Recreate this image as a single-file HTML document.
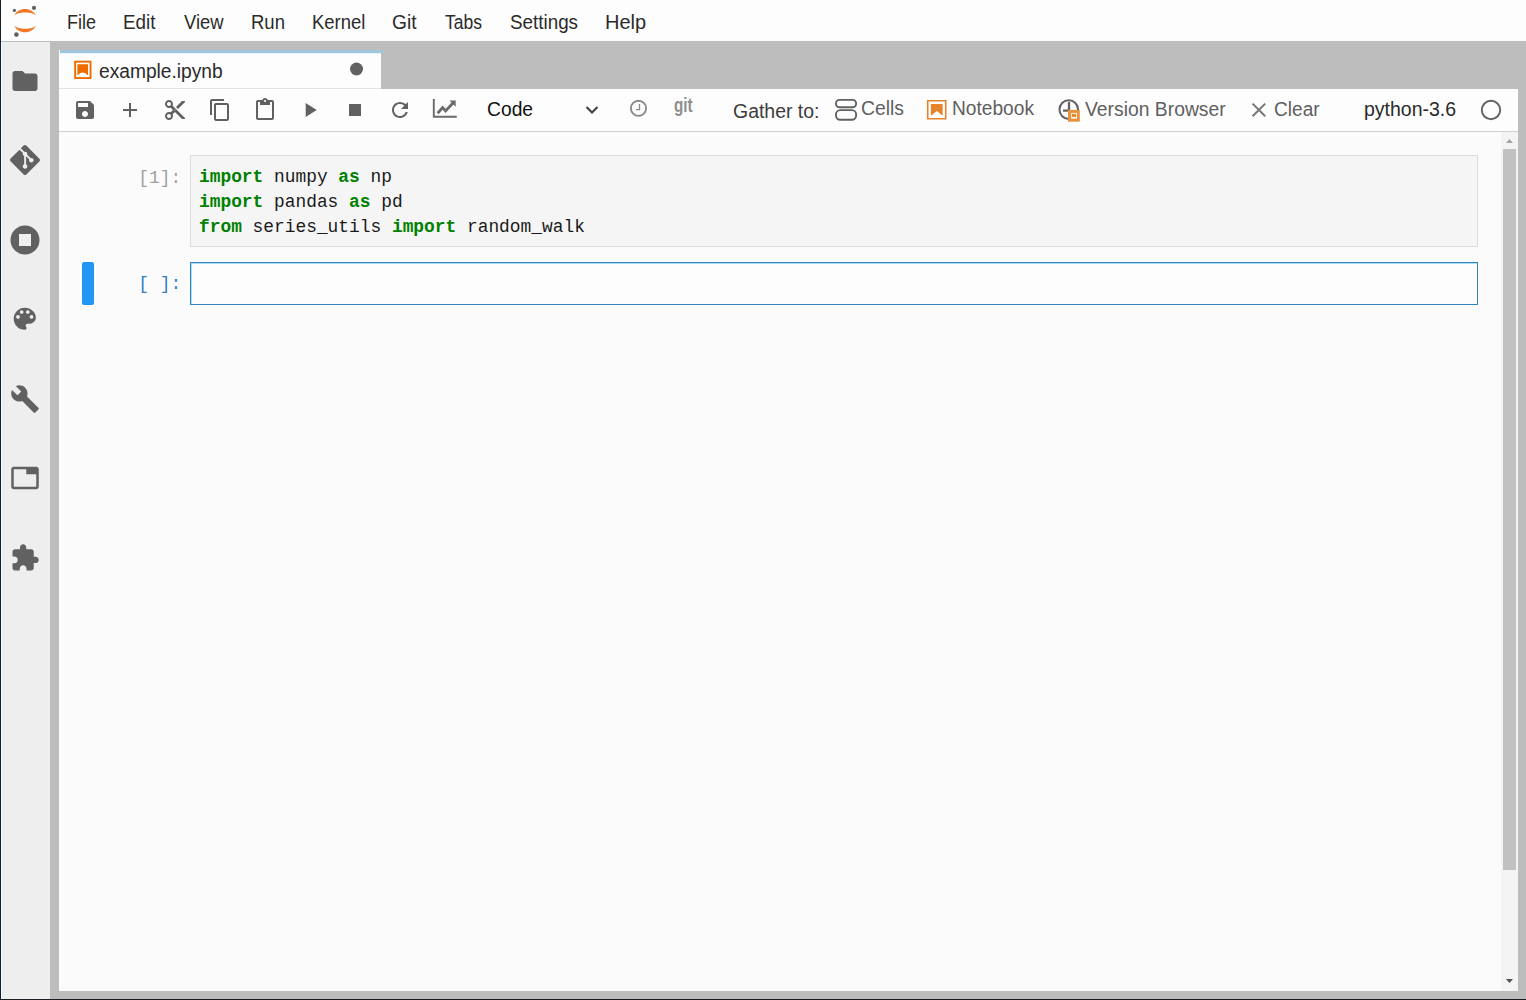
<!DOCTYPE html>
<html><head><meta charset="utf-8"><title>JupyterLab</title>
<style>
html,body{margin:0;padding:0;width:1526px;height:1000px;overflow:hidden;background:#bdbdbd;font-family:"Liberation Sans",sans-serif}
.a{position:absolute;display:block}
.t{position:absolute;white-space:pre;transform-origin:0 0}
.code{position:absolute;white-space:pre;font:17.88px/25px "Liberation Mono",monospace;color:#1a1a1a}
.code b{color:#008000;font-weight:700}
</style></head><body>
<div class="a" style="left:0;top:0;width:1526px;height:41px;background:#fdfdfd"></div>
<div class="a" style="left:1px;top:42px;width:49px;height:957px;background:#eeeeee"></div>
<!-- tab -->
<div class="a" style="left:59px;top:50px;width:322px;height:38px;background:#fdfdfd"></div>
<div class="a" style="left:60px;top:50px;width:323px;height:3px;background:#a0c6dc"></div><div class="a" style="left:60px;top:53px;width:321px;height:1px;background:#e6f6fc"></div>
<div class="a" style="left:59px;top:88px;width:322px;height:1px;background:#e2e2e2"></div>
<svg class="a" style="left:72px;top:58px" width="22" height="24" viewBox="72 58 22 24"><rect x="75.15" y="61.65" width="15.4" height="16.4" stroke="#ef6c00" stroke-width="1.9" fill="none"/><path d="M77.4 64.3H88V75.2Q82.7 69.6 77.4 75.2Z" fill="#ef6c00"/></svg>
<svg class="a" style="left:349px;top:62px" width="15" height="15" viewBox="0 0 15 15"><circle cx="7.5" cy="7" r="6.5" fill="#616161"/></svg>
<!-- toolbar -->
<div class="a" style="left:59px;top:89px;width:1459px;height:42px;background:#fdfdfd"></div>
<div class="a" style="left:59px;top:131px;width:1459px;height:1px;background:#cfcfcf"></div>
<!-- notebook -->
<div class="a" style="left:59px;top:132px;width:1459px;height:859px;background:#fbfbfb"></div>
<!-- scrollbar -->
<div class="a" style="left:1501px;top:132px;width:17px;height:859px;background:#f4f4f4"></div>
<div class="a" style="left:1503px;top:149px;width:13px;height:721px;background:#c1c1c1"></div>
<svg class="a" style="left:1501px;top:132px" width="17" height="17" viewBox="0 0 17 17"><path d="M5 11h7l-3.5-4z" fill="#a3a3a3"/></svg>
<svg class="a" style="left:1501px;top:974px" width="17" height="17" viewBox="0 0 17 17"><path d="M5 5h7l-3.5 4z" fill="#505050"/></svg>
<!-- cell 1 -->
<div class="a" style="left:190px;top:155px;width:1286px;height:90px;background:#f5f5f5;border:1px solid #dcdcdc"></div>
<!-- cell 2 -->
<div class="a" style="left:82px;top:262px;width:12px;height:43px;background:#2196f3;border-radius:2px"></div>
<div class="a" style="left:190px;top:262px;width:1286px;height:41px;background:#fdfdfd;border:1px solid #3784bd;box-shadow:inset 1px 1px 0 #a8def5"></div>
<!-- dark frame -->
<div class="a" style="left:0;top:0;width:1px;height:1000px;background:#1a1e28"></div><div class="a" style="left:1px;top:42px;width:1px;height:957px;background:#f2fbff"></div><div class="a" style="left:2px;top:42px;width:2px;height:957px;background:#e7edf4"></div>
<div class="a" style="left:0;top:999px;width:1526px;height:1px;background:#1c1c24"></div>
<svg class="a" style="left:5px;top:2px" width="40" height="40" viewBox="5 2 40 40" ><path fill="#f37726" d="M14.2 15.8 C17.5 6.8 32.5 6.8 36 16 C33 11.5 17.5 11.5 14.2 15.8Z"/><path fill="#f37726" d="M14.2 25.6 C17.5 34.6 32.5 34.6 36 25.6 C33 29.9 17.5 29.9 14.2 25.6Z"/><circle cx="14.4" cy="10.4" r="1.6" fill="#616262"/><circle cx="34" cy="7.9" r="2.1" fill="#616262"/><circle cx="16.4" cy="34.6" r="2.3" fill="#616262"/></svg>
<svg class="a" style="left:10px;top:66px" width="30" height="30" viewBox="0 0 24 24" ><path fill="#616161" d="M10 4H4c-1.1 0-1.99.9-1.99 2L2 18c0 1.1.9 2 2 2h16c1.1 0 2-.9 2-2V8c0-1.1-.9-2-2-2h-8l-2-2z"/></svg>
<svg class="a" style="left:10px;top:145px" width="30" height="30" viewBox="0 0 92 92" ><path fill="#616161" d="M90.156,41.965 L50.036,1.848 C47.726,-0.463 43.979,-0.463 41.664,1.848 L33.336,10.180 L43.902,20.746 C46.359,19.916 49.176,20.473 51.133,22.430 C53.098,24.398 53.652,27.238 52.801,29.707 L62.988,39.891 C65.453,39.040 68.297,39.590 70.266,41.563 C73.016,44.313 73.016,48.766 70.266,51.520 C67.512,54.270 63.055,54.270 60.301,51.520 C58.234,49.449 57.723,46.410 58.773,43.859 L49.273,34.363 L49.273,59.355 C49.945,59.688 50.578,60.133 51.133,60.688 C53.883,63.438 53.883,67.895 51.133,70.648 C48.383,73.398 43.922,73.398 41.176,70.648 C38.426,67.895 38.426,63.438 41.176,60.688 C41.855,60.008 42.641,59.496 43.480,59.152 L43.480,33.926 C42.641,33.582 41.859,33.074 41.176,32.391 C39.094,30.309 38.594,27.250 39.660,24.691 L29.242,14.273 L1.734,41.777 C-0.578,44.094 -0.578,47.840 1.734,50.152 L41.855,90.270 C44.164,92.582 47.910,92.582 50.223,90.270 L90.156,50.336 C92.469,48.023 92.469,44.273 90.156,41.965 Z"/></svg>
<svg class="a" style="left:10px;top:225px" width="30" height="30" viewBox="0 0 30 30" ><circle cx="15" cy="15" r="14.5" fill="#616161"/><rect x="9" y="9" width="12" height="12" fill="#eeeeee"/></svg>
<svg class="a" style="left:9.8px;top:303.5px" width="29.5" height="29.5" viewBox="0 0 24 24" ><path fill="#616161" d="M12 3c-4.97 0-9 4.03-9 9s4.03 9 9 9c.83 0 1.5-.67 1.5-1.5 0-.39-.15-.74-.39-1.01-.23-.26-.38-.61-.38-.99 0-.83.67-1.5 1.5-1.5H16c2.76 0 5-2.24 5-5 0-4.42-4.03-8-9-8zm-5.5 9c-.83 0-1.5-.67-1.5-1.5S5.670 9 6.5 9 8 9.67 8 10.5 7.33 12 6.5 12zm3-4C8.67 8 8 7.33 8 6.5S8.67 5 9.5 5s1.5.67 1.5 1.5S10.33 8 9.5 8zm5 0c-.83 0-1.5-.67-1.5-1.5S13.67 5 14.5 5s1.5.67 1.5 1.5S15.33 8 14.5 8zm3 4c-.83 0-1.5-.67-1.5-1.5S16.67 9 17.5 9s1.5.67 1.5 1.5-.67 1.5-1.5 1.5z"/></svg>
<svg class="a" style="left:10px;top:384px" width="30" height="30" viewBox="0 0 24 24" ><path fill="#616161" d="M22.7 19l-9.1-9.1c.9-2.3.4-5-1.5-6.9-2-2-5-2.4-7.4-1.3L9 6 6 9 1.6 4.7C.4 7.1.9 10.1 2.9 12.1c1.9 1.9 4.6 2.4 6.9 1.5l9.1 9.1c.4.4 1 .4 1.4 0l2.3-2.3c.5-.4.5-1.1.1-1.4z"/></svg>
<svg class="a" style="left:10px;top:463px" width="30" height="30" viewBox="0 0 24 24" ><path fill="#616161" d="M21 3H3c-1.1 0-2 .9-2 2v14c0 1.1.9 2 2 2h18c1.1 0 2-.9 2-2V5c0-1.1-.9-2-2-2zm0 16H3V5h10v4h8v10z"/></svg>
<svg class="a" style="left:9.75px;top:543px" width="30" height="30" viewBox="0 0 24 24" ><path fill="#616161" d="M20.5 11H19V7c0-1.1-.9-2-2-2h-4V3.5C13 2.12 11.88 1 10.5 1S8 2.12 8 3.5V5H4c-1.1 0-1.99.9-1.99 2v3.8H3.5c1.49 0 2.7 1.21 2.7 2.7s-1.21 2.7-2.7 2.7H2V20c0 1.1.9 2 2 2h3.8v-1.5c0-1.49 1.21-2.7 2.7-2.7 1.49 0 2.7 1.21 2.7 2.7V22H17c1.1 0 2-.9 2-2v-4h1.5c1.38 0 2.5-1.12 2.5-2.5S21.88 11 20.5 11z"/></svg>
<svg class="a" style="left:73px;top:98px" width="24" height="24" viewBox="0 0 24 24" ><path fill="#616161" d="M17 3H5c-1.11 0-2 .9-2 2v14c0 1.1.89 2 2 2h14c1.1 0 2-.9 2-2V7l-4-4zm-5 16c-1.66 0-3-1.34-3-3s1.340-3 3-3 3 1.34 3 3-1.34 3-3 3zm3-10H5V5h10v4z"/></svg>
<svg class="a" style="left:118px;top:98px" width="24" height="24" viewBox="0 0 24 24" ><path fill="#616161" d="M19 13h-6v6h-2v-6H5v-2h6V5h2v6h6v2z"/></svg>
<svg class="a" style="left:163px;top:98px" width="24" height="24" viewBox="0 0 24 24" ><path fill="#616161" d="M9.64 7.64c.23-.5.36-1.05.36-1.64 0-2.21-1.79-4-4-4S2 3.79 2 6s1.79 4 4 4c.59 0 1.14-.13 1.64-.36L10 12l-2.36 2.36C7.14 14.13 6.59 14 6 14c-2.21 0-4 1.79-4 4s1.79 4 4 4 4-1.79 4-4c0-.59-.13-1.14-.36-1.64L12 14l7 7h3v-1L9.64 7.64zM6 8c-1.1 0-2-.89-2-2s.9-2 2-2 2 .89 2 2-.9 2-2 2zm0 12c-1.1 0-2-.89-2-2s.9-2 2-2 2 .89 2 2-.9 2-2 2zm6-7.5c-.28 0-.5-.22-.5-.5s.22-.5.5-.5.5.22.5.5-.22.5-.5.5zM19 3l-6 6 2 2 7-7V3z"/></svg>
<svg class="a" style="left:208px;top:98px" width="24" height="24" viewBox="0 0 24 24" ><path fill="#616161" d="M16 1H4c-1.1 0-2 .9-2 2v14h2V3h12V1zm3 4H8c-1.1 0-2 .9-2 2v14c0 1.1.9 2 2 2h11c1.1 0 2-.9 2-2V7c0-1.1-.9-2-2-2zm0 16H8V7h11v14z"/></svg>
<svg class="a" style="left:253px;top:98px" width="24" height="24" viewBox="0 0 24 24" ><path fill="#616161" d="M19 2h-4.18C14.4.84 13.3 0 12 0c-1.3 0-2.4.84-2.82 2H5c-1.1 0-2 .9-2 2v16c0 1.1.9 2 2 2h14c1.1 0 2-.9 2-2V4c0-1.1-.9-2-2-2zm-7 0c.55 0 1 .45 1 1s-.45 1-1 1-1-.45-1-1 .45-1 1-1zm7 18H5V4h2v3h10V4h2v16z"/></svg>
<svg class="a" style="left:298px;top:98px" width="24" height="24" viewBox="0 0 24 24" ><path fill="#616161" d="M8 5v14l11-7z" transform="translate(-0.3,0)"/></svg>
<svg class="a" style="left:343px;top:98px" width="24" height="24" viewBox="0 0 24 24" ><rect x="6" y="6" width="12" height="12" fill="#616161"/></svg>
<svg class="a" style="left:388px;top:98px" width="24" height="24" viewBox="0 0 24 24" ><path fill="#616161" d="M17.65 6.35C16.2 4.9 14.21 4 12 4c-4.42 0-7.99 3.58-7.99 8s3.570 8 7.99 8c3.73 0 6.84-2.55 7.73-6h-2.08c-.82 2.33-3.04 4-5.65 4-3.31 0-6-2.69-6-6s2.69-6 6-6c1.66 0 3.14.69 4.22 1.78L13 11h7V4l-2.35 2.35z"/></svg>
<svg class="a" style="left:430px;top:96px" width="30" height="24" viewBox="0 0 30 24" ><path d="M3.8 3V20.8H26.8" stroke="#6a6a6a" stroke-width="1.9" fill="none"/><path d="M7.6 17.2l5-5.6 3 3.4 8.5-9.2" stroke="#6a6a6a" stroke-width="2.8" fill="none" stroke-linejoin="miter"/><path d="M19.5 4.6h6.2v6.2z" fill="#6a6a6a"/></svg>
<svg class="a" style="left:584px;top:104px" width="16" height="12" viewBox="0 0 16 12" ><path d="M2.5 3l5.5 5.5 5.5-5.5" stroke="#444" stroke-width="2.2" fill="none"/></svg>
<svg class="a" style="left:628px;top:98px" width="21" height="21" viewBox="0 0 21 21" ><circle cx="10.5" cy="10.3" r="7.6" stroke="#8a8a8a" stroke-width="1.9" fill="none"/><path d="M11.5 6v5.6H8" stroke="#8a8a8a" stroke-width="1.3" fill="none"/></svg>
<svg class="a" style="left:832px;top:96px" width="28" height="28" viewBox="0 0 28 28" ><rect x="4" y="3.9" width="20.1" height="7.4" rx="3.5" stroke="#616161" stroke-width="1.9" fill="none"/><rect x="4" y="14.1" width="20.1" height="9.7" rx="4.2" stroke="#616161" stroke-width="1.9" fill="none"/></svg>
<svg class="a" style="left:925.2px;top:98.3px" width="23.5" height="23.5" viewBox="0 0 22 22" ><path fill="#e8822a" d="M18.7 3.3v15.4H3.3V3.3h15.4m1.5-1.5H1.8v18.3h18.3l.1-18.3z"/><path fill="#e8822a" d="M16.5 16.5l-5.4-4.3-5.6 4.3v-11h11z"/></svg>
<svg class="a" style="left:1056px;top:97px" width="28" height="28" viewBox="0 0 28 28" ><circle cx="12.75" cy="12.6" r="9.3" stroke="#616161" stroke-width="2" fill="none"/><path d="M13 4.9V13.7H7" stroke="#616161" stroke-width="2.3" fill="none"/><rect x="12" y="12.9" width="11.8" height="11.8" fill="#e6923f"/><rect x="15.1" y="15.9" width="5.9" height="5.8" fill="#fdf3dc"/><rect x="16" y="16.9" width="4" height="3" fill="#e08a30"/></svg>
<svg class="a" style="left:1250px;top:100.7px" width="18" height="18" viewBox="0 0 18 18" ><path d="M2.6 2.6l12.6 12.6M15.2 2.6l-12.6 12.6" stroke="#767676" stroke-width="2" fill="none"/></svg>
<svg class="a" style="left:1480px;top:99px" width="22" height="22" viewBox="0 0 22 22" ><circle cx="11" cy="11" r="9.2" stroke="#616161" stroke-width="1.9" fill="none"/></svg>
<span class="t" style="left:67.10px;top:12.07px;font:400 20px/20px 'Liberation Sans',sans-serif;color:#2b2b2b;transform:scaleX(0.9002)">File</span>
<span class="t" style="left:123.06px;top:12.07px;font:400 20px/20px 'Liberation Sans',sans-serif;color:#2b2b2b;transform:scaleX(0.9438)">Edit</span>
<span class="t" style="left:184.00px;top:12.07px;font:400 20px/20px 'Liberation Sans',sans-serif;color:#2b2b2b;transform:scaleX(0.9186)">View</span>
<span class="t" style="left:251.07px;top:12.07px;font:400 20px/20px 'Liberation Sans',sans-serif;color:#2b2b2b;transform:scaleX(0.9258)">Run</span>
<span class="t" style="left:312.08px;top:12.07px;font:400 20px/20px 'Liberation Sans',sans-serif;color:#2b2b2b;transform:scaleX(0.9225)">Kernel</span>
<span class="t" style="left:392.04px;top:12.07px;font:400 20px/20px 'Liberation Sans',sans-serif;color:#2b2b2b;transform:scaleX(0.9600)">Git</span>
<span class="t" style="left:445.00px;top:12.07px;font:400 20px/20px 'Liberation Sans',sans-serif;color:#2b2b2b;transform:scaleX(0.8758)">Tabs</span>
<span class="t" style="left:510.00px;top:12.07px;font:400 20px/20px 'Liberation Sans',sans-serif;color:#2b2b2b;transform:scaleX(0.9410)">Settings</span>
<span class="t" style="left:605.00px;top:12.07px;font:400 20px/20px 'Liberation Sans',sans-serif;color:#2b2b2b;transform:scaleX(0.9998)">Help</span>
<span class="t" style="left:99.00px;top:60.57px;font:400 20px/20px 'Liberation Sans',sans-serif;color:#2b2b2b;transform:scaleX(0.9585)">example.ipynb</span>
<span class="t" style="left:487.04px;top:98.57px;font:400 20px/20px 'Liberation Sans',sans-serif;color:#111111;transform:scaleX(0.9638)">Code</span>
<span class="t" style="left:674.00px;top:96.39px;font:700 19.5px/19.5px 'Liberation Sans',sans-serif;color:#8e8e8e;transform:scaleX(0.7810)">git</span>
<span class="t" style="left:732.53px;top:101.07px;font:400 20px/20px 'Liberation Sans',sans-serif;color:#3c3c3c;transform:scaleX(0.9725)">Gather to:</span>
<span class="t" style="left:861.03px;top:98.27px;font:400 20px/20px 'Liberation Sans',sans-serif;color:#5f5f5f;transform:scaleX(0.9666)">Cells</span>
<span class="t" style="left:952.04px;top:98.27px;font:400 20px/20px 'Liberation Sans',sans-serif;color:#5f5f5f;transform:scaleX(0.9578)">Notebook</span>
<span class="t" style="left:1084.50px;top:98.67px;font:400 20px/20px 'Liberation Sans',sans-serif;color:#5f5f5f;transform:scaleX(0.9661)">Version Browser</span>
<span class="t" style="left:1274.05px;top:98.97px;font:400 20px/20px 'Liberation Sans',sans-serif;color:#5f5f5f;transform:scaleX(0.9547)">Clear</span>
<span class="t" style="left:1364.03px;top:98.97px;font:400 20px/20px 'Liberation Sans',sans-serif;color:#2a2a2a;transform:scaleX(0.9744)">python-3.6</span>
<div class="code prompt" style="left:138.3px;top:165.53px;color:#a0a0a0">[1]:</div>
<div class="code prompt" style="left:138.3px;top:271.93px;color:#307fc1">[ ]:</div>
<div class="code" style="left:199px;top:165.33px"><b>import</b> numpy <b>as</b> np</div>
<div class="code" style="left:199px;top:190.13px"><b>import</b> pandas <b>as</b> pd</div>
<div class="code" style="left:199px;top:214.93px"><b>from</b> series_utils <b>import</b> random_walk</div>
</body></html>
